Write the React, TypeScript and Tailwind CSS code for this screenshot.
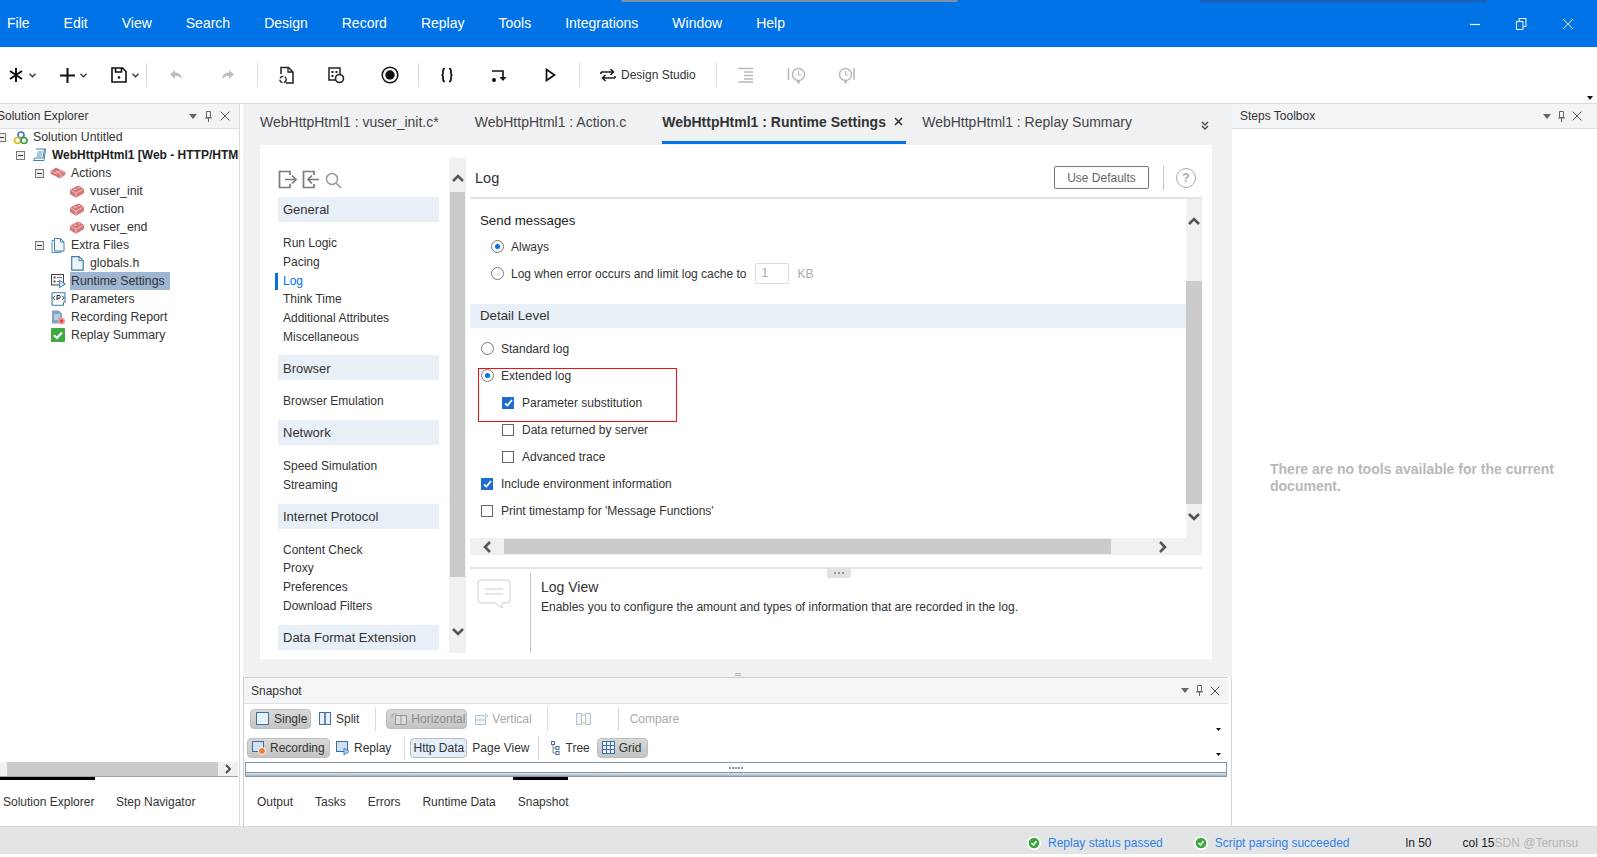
import React from "react";

const menu = ["File", "Edit", "View", "Search", "Design", "Record", "Replay", "Tools", "Integrations", "Window", "Help"];

function Svg({ w = 16, h = 16, vb, children, className = "" }: { w?: number; h?: number; vb?: string; children: React.ReactNode; className?: string }) {
  return (
    <svg width={w} height={h} viewBox={vb || `0 0 ${w} ${h}`} fill="none" className={"shrink-0 " + className}>
      {children}
    </svg>
  );
}

const Chev = ({ c = "#333" }: { c?: string }) => (
  <Svg w={7} h={5}><path d="M.5 .8 3.5 3.8 6.500 .8" stroke={c} strokeWidth="1.300" /></Svg>
);

const Sep = ({ cls }: { cls: string }) => <div className={"w-px bg-[#dcdcdc] shrink-0 " + cls} />;

function PanelControls({ gap = "gap-[8px]" }: { gap?: string }) {
  return (
    <div className={"flex items-center " + gap}>
      <Svg w={8} h={5}><path d="M0 0h8L4 5z" fill="#666" /></Svg>
      <Svg w={7} h={11}><path d="M1.500 .5h4v6h-4zM0 7h7M3.500 7v4" stroke="#666" strokeWidth="1" /></Svg>
      <Svg w={10} h={10}><path d="M.7 .7 9.300 9.300M9.300 .7 .7 9.300" stroke="#555" strokeWidth="1" /></Svg>
    </div>
  );
}

const Brick = () => (
  <Svg w={14} h={14}>
    <path d="M.5 6 8 2l5.500 3v4L6 13.300.5 10z" fill="#d97a7a" stroke="#c25f5f" strokeWidth=".7" />
    <path d="M.7 6 6 9.200 13.300 5M6 9.200v4" stroke="#f5d0d0" strokeWidth=".8" />
    <ellipse cx="5.300" cy="5.300" rx="2.100" ry="1.400" fill="#eab0b0" stroke="#c25f5f" strokeWidth=".6" />
    <ellipse cx="9" cy="3.800" rx="2" ry="1.300" fill="#eab0b0" stroke="#c25f5f" strokeWidth=".6" />
  </Svg>
);

const Bricks = () => (
  <Svg w={16} h={12}>
    <path d="M1 4 6 1l4 2 5 2v2.500L10 11 6 9 1 6.500z" fill="#d97a7a" stroke="#c25f5f" strokeWidth=".7" />
    <path d="M1 4l5 2.500L10 4M6 4l5 3v4M10 3l5 2.500" stroke="#f3c9c9" strokeWidth=".8" />
  </Svg>
);

const ICONS: Record<string, React.ReactNode> = {
  solution: (
    <Svg w={15} h={15}>
      <circle cx="8" cy="5" r="3" stroke="#3a78c9" strokeWidth="1.700" />
      <circle cx="4.500" cy="10.500" r="3" stroke="#e5b71e" strokeWidth="1.700" />
      <circle cx="11" cy="10.500" r="3" stroke="#3f9e3f" strokeWidth="1.700" />
    </Svg>
  ),
  project: (
    <Svg w={15} h={14}>
      <path d="M4 1h9.500L12 12.500H1.500L2.800 10H11L12.500 1" stroke="#3f7ea8" strokeWidth="1" />
      <path d="M5.500 4h5M5 6h5M4.700 8h5" stroke="#3f7ea8" strokeWidth=".9" />
    </Svg>
  ),
  bricks: <Bricks />,
  brick: <Brick />,
  files: (
    <Svg w={14} h={15}>
      <path d="M1 2.500h2M1 2.500v12h9v-1.500" stroke="#4a90b8" strokeWidth="1" />
      <path d="M3.500 .5h6l3.500 3.500v9h-9.500z" fill="#f3f8fb" stroke="#3f7ea8" strokeWidth="1" />
      <path d="M9.500 .5v3.500h3.500" stroke="#3f7ea8" strokeWidth="1" />
    </Svg>
  ),
  file: (
    <Svg w={13} h={15}>
      <path d="M.7 .7h7.500l4 4v9.500H.7z" fill="#eef5fa" stroke="#3f7ea8" strokeWidth="1.200" />
      <path d="M8 .7v4h4.200" stroke="#3f7ea8" strokeWidth="1" />
    </Svg>
  ),
  runtime: (
    <Svg w={15} h={14}>
      <rect x=".5" y=".5" width="12" height="10.500" fill="#f5f5f5" stroke="#444" />
      <rect x="2.500" y="2.500" width="2" height="2" fill="#555" />
      <rect x="2.500" y="6.500" width="2" height="2" fill="#555" />
      <path d="M6 3.500h5M6 7.500h2" stroke="#777" />
      <path d="M8.500 6.500 14.500 10 8.500 13.500z" fill="#cfe3f7" stroke="#3f82c9" />
    </Svg>
  ),
  params: (
    <Svg w={15} h={14}>
      <path d="M1 .7h13v9.500h-1.500M1 .7v12.500h11.500v-3" stroke="#3f7ea8" strokeWidth="1.100" />
      <path d="M3.800 3.800 2 5.800l1.800 2M11.200 3.800 13 5.800l-1.800 2" stroke="#222" strokeWidth=".9" />
      <path d="M6 8V3.500h2a1.300 1.300 0 0 1 0 2.700H6" stroke="#222" strokeWidth="1" />
    </Svg>
  ),
  report: (
    <Svg w={15} h={15}>
      <path d="M1 .5h7l3 3v10H1z" fill="#7fa4c4" />
      <path d="M3 5h6M3 7h6M3 9h4" stroke="#fff" strokeWidth=".9" />
      <circle cx="10.500" cy="11" r="3.600" fill="#f0a0a0" />
      <circle cx="10.500" cy="11" r="1.700" fill="#ea3c3c" />
    </Svg>
  ),
  summary: (
    <Svg w={14} h={14}>
      <rect width="14" height="14" rx="1" fill="#3eab3e" />
      <path d="M3 7.200 6 10l5-5.500" stroke="#fff" strokeWidth="2.200" />
    </Svg>
  ),
};

function TreeRow({ indent, exp, icon, text, bold, sel }: { indent: string; exp?: boolean; icon: string; text: string; bold?: boolean; sel?: boolean }) {
  return (
    <div className={"flex items-center h-[18px] whitespace-nowrap " + indent}>
      {exp && (
        <div className="w-[9px] h-[9px] border border-[#777] bg-[#eee] flex items-center justify-center mr-[7px] shrink-0">
          <div className="w-[5px] h-px bg-[#333]" />
        </div>
      )}
      <div className="w-[14px] flex justify-center shrink-0">{ICONS[icon]}</div>
      <span className={"ml-[5px] px-px leading-[18px] " + (sel ? "bg-[#9fb6d3] pr-[5px] " : "") + (bold ? "font-bold text-[#222] text-[12px]" : "text-[#333] text-[12.300px]")}>{text}</span>
    </div>
  );
}

function NavSection({ title, items, active, mb }: { title: string; items: string[]; active?: string; mb: string }) {
  return (
    <div className={mb}>
      <div className="h-[25px] bg-[#e8eff7] flex items-center pl-[5px] pt-px text-[13px] text-[#333]">{title}</div>
      <div className="mt-[12px]">
        {items.map((i) => (
          <div key={i} className={"h-[18.800px] leading-[18.800px] pl-[5px] relative " + (i === active ? "text-[#0073e7]" : "text-[#333]")}>
            {i === active && <div className="absolute left-[-3px] top-px w-[3px] h-[17px] bg-[#0073e7]" />}
            {i}
          </div>
        ))}
      </div>
    </div>
  );
}

function Radio({ on }: { on?: boolean }) {
  return (
    <div className="w-[13px] h-[13px] rounded-full border border-[#777] bg-white flex items-center justify-center shrink-0">
      {on && <div className="w-[5px] h-[5px] rounded-full bg-[#0073e7]" />}
    </div>
  );
}

function Check({ on }: { on?: boolean }) {
  return on ? (
    <div className="w-[12px] h-[12px] bg-[#1c6cd1] flex items-center justify-center shrink-0">
      <Svg w={9} h={8}><path d="M1 4.500 3.500 6.500 8 1" stroke="#fff" strokeWidth="1.800" /></Svg>
    </div>
  ) : (
    <div className="w-[12px] h-[12px] border border-[#666] bg-white shrink-0" />
  );
}

function Arrow({ dir, c = "#555" }: { dir: "u" | "d" | "l" | "r"; c?: string }) {
  const d = { u: "M1 7 6 2l5 5", d: "M1 2l5 5 5-5", l: "M7 1 2 6l5 5", r: "M2 1l5 5-5 5" }[dir];
  const w = dir === "u" || dir === "d" ? 12 : 9;
  const h = dir === "u" || dir === "d" ? 9 : 12;
  return <Svg w={w} h={h}><path d={d} stroke={c} strokeWidth="2.600" /></Svg>;
}

function OptRow({ ml, kind, on, text }: { ml: string; kind: "r" | "c"; on?: boolean; text: string }) {
  return (
    <div className={"flex items-center h-[27px] text-[#333] " + ml}>
      {kind === "r" ? <Radio on={on} /> : <Check on={on} />}
      <span className={kind === "r" ? "ml-[7px]" : "ml-[8px]"}>{text}</span>
    </div>
  );
}

function SnapBtn({ children, cls, on }: { children: React.ReactNode; cls: string; on?: boolean }) {
  return (
    <div className={"h-[20px] flex items-center rounded-[4px] shrink-0 " + (on ? "bg-gradient-to-b from-[#d9d9d9] to-[#c4c4c4] border border-[#bdbdbd] " : "") + cls}>
      {children}
    </div>
  );
}

const CheckCircle = () => (
  <Svg w={14} h={14}>
    <circle cx="7" cy="7" r="7" fill="#fff" />
    <circle cx="7" cy="7" r="5.300" fill="#3ca63c" />
    <path d="M4.500 7 6.500 9 9.500 5" stroke="#fff" strokeWidth="1.500" />
  </Svg>
);

export default function App() {
  return (
    <div className="w-[1597px] h-[857px] overflow-hidden bg-white flex flex-col relative font-['Liberation_Sans','Arial',sans-serif] text-[12px]">
      {/* stray window shadows at the top edge */}
      <div className="absolute left-[621px] top-0 w-[337px] h-[2px] bg-[#7f8ea3] rounded-b-[3px]" />
      <div className="absolute left-[1200px] top-0 w-[287px] h-[2px] bg-[#1d5fae]" />

      {/* title bar */}
      <header className="h-[47px] bg-[#0073e7] flex items-center shrink-0 text-white">
        <nav className="flex gap-[34px] pl-[7px] text-[14px]">
          {menu.map((m) => <span key={m}>{m}</span>)}
        </nav>
        <div className="ml-auto flex items-center gap-[35px] pr-[23px]">
          <Svg w={12} h={12}><path d="M1 6.500h10" stroke="#fff" strokeWidth="1.200" /></Svg>
          <Svg w={11} h={12}><path d="M.5 3.500h6.500v8H.5zM3 3.500V.5h7v8H7" stroke="#fff" /></Svg>
          <Svg w={12} h={12}><path d="M1 1l10 10M11 1 1 11" stroke="#fff" /></Svg>
        </div>
      </header>

      {/* toolbar */}
      <div className="h-[56px] shrink-0 flex items-center relative pl-[8px]">
        <div className="flex items-center gap-[5px] w-[45px]">
          <Svg w={16} h={16}><path d="M8 1v14M2 4l12 8M14 4 2 12" stroke="#111" strokeWidth="2" /></Svg>
          <Chev />
        </div>
        <div className="flex items-center gap-[4px] ml-[6px] w-[46px]">
          <Svg w={17} h={17}><path d="M8.500 1v15M1 8.500h15" stroke="#111" strokeWidth="2" /></Svg>
          <Chev />
        </div>
        <div className="flex items-center gap-[5px] ml-[6px]">
          <Svg w={16} h={16}><path d="M1 1h10.500L15 4.500V15H1zM4.500 1v4h6V1" stroke="#111" strokeWidth="1.600" /><circle cx="8" cy="10.500" r="1.300" fill="#111" /></Svg>
          <Chev />
        </div>
        <Sep cls="h-[24px] ml-[7px]" />
        <div className="ml-[22px]">
          <Svg w={14} h={12}><path d="M6 1 1 5.500 6 10V7c3 0 5 .5 7 3-.5-4-3-6.500-7-6.500z" fill="#bdbdbd" /></Svg>
        </div>
        <div className="ml-[38px]">
          <Svg w={14} h={12}><path d="M8 1l5 4.500L8 10V7c-3 0-5 .5-7 3 .5-4 3-6.500 7-6.500z" fill="#bdbdbd" /></Svg>
        </div>
        <Sep cls="h-[24px] ml-[22px]" />
        <div className="ml-[20px]">
          <Svg w={17} h={19}><path d="M3 8V1.500h7.500L15 6v11H8" stroke="#222" strokeWidth="1.500" /><path d="M10 1.500V6h5" stroke="#222" strokeWidth="1.300" /><circle cx="5" cy="13.500" r="3.200" stroke="#222" strokeWidth="1.300" strokeDasharray="4 1.500" /></Svg>
        </div>
        <div className="ml-[33px]">
          <Svg w={17} h={17}><rect x="1" y="1" width="11" height="12" stroke="#222" strokeWidth="1.500" /><path d="M3.500 4h2v2h-2zM7.500 4h2v2h-2zM3.500 8h2v2h-2z" fill="#222" /><circle cx="11.500" cy="11.500" r="4" fill="#fff" stroke="#222" strokeWidth="1.600" /></Svg>
        </div>
        <div className="ml-[36px]">
          <Svg w={18} h={18}><circle cx="9" cy="9" r="7.800" stroke="#111" strokeWidth="1.500" /><circle cx="9" cy="9" r="4.700" fill="#111" /></Svg>
        </div>
        <Sep cls="h-[24px] ml-[19px]" />
        <div className="ml-[21px]">
          <Svg w={14} h={16}><path d="M5 1.500C3 1.500 3 2.500 3 4v2.500C3 7.500 2.500 8 1.500 8c1 0 1.500.5 1.500 1.500V12c0 1.500 0 2.500 2 2.500M9 1.500c2 0 2 1 2 2.500v2.500c0 1 .5 1.500 1.500 1.500-1 0-1.500.5-1.500 1.500V12c0 1.500 0 2.500-2 2.500" stroke="#111" strokeWidth="1.700" /></Svg>
        </div>
        <div className="ml-[37px]">
          <Svg w={16} h={15}><path d="M1 3h11v7" stroke="#111" strokeWidth="1.600" /><path d="M8.500 9l3.500 4 3.500-4z" fill="#111" /><circle cx="3" cy="12" r="2" fill="#111" /></Svg>
        </div>
        <div className="ml-[38px]">
          <Svg w={11} h={14}><path d="M1.500 1.500 9.500 7l-8 5.500z" stroke="#111" strokeWidth="1.700" /></Svg>
        </div>
        <Sep cls="h-[24px] ml-[23px]" />
        <div className="ml-[20px] flex items-center gap-[5px] text-[#333]">
          <Svg w={16} h={16}><path d="M1 5h12M10.500 2 13.500 5l-3 3M1 5v2M15 11H3M5.500 8 2.500 11l3 3M15 11V9" stroke="#222" strokeWidth="1.600" /></Svg>
          <span>Design Studio</span>
        </div>
        <Sep cls="h-[24px] ml-[20px]" />
        <div className="ml-[20px]">
          <Svg w={17} h={16}><path d="M1 1.500h15M7 5h9M7 8.500h9M7 12h9M1 15h15" stroke="#b8b8b8" strokeWidth="1.500" /></Svg>
        </div>
        <div className="ml-[33px]">
          <Svg w={19} h={17}><circle cx="11.500" cy="7.500" r="6" stroke="#b8b8b8" strokeWidth="1.500" /><path d="M11.500 4v4h3" stroke="#b8b8b8" /><path d="M1.500 1v12" stroke="#b8b8b8" strokeWidth="1.500" /><circle cx="11.500" cy="15" r="1.500" fill="#b8b8b8" /></Svg>
        </div>
        <div className="ml-[32px]">
          <Svg w={18} h={17}><circle cx="7.500" cy="7.500" r="6" stroke="#b8b8b8" strokeWidth="1.500" /><path d="M7.500 4v4h3" stroke="#b8b8b8" /><path d="M16 1v12" stroke="#b8b8b8" strokeWidth="1.500" /><circle cx="7.500" cy="15" r="1.500" fill="#b8b8b8" /></Svg>
        </div>
        <div className="absolute right-[4px] bottom-[3px]">
          <Svg w={6} h={4}><path d="M0 0h6L3 4z" fill="#111" /></Svg>
        </div>
      </div>

      {/* main */}
      <div className="h-[723px] shrink-0 flex border-t border-[#d9dadb]">
        {/* left column */}
        <aside className="w-[240px] shrink-0 flex flex-col border-r border-[#dcdcdc]">
          <div className="h-[25px] bg-[#f3f4f6] border-b border-[#dfe0e1] flex items-center pr-[9px] overflow-hidden shrink-0">
            <span className="ml-[-3px] text-[#333]">Solution Explorer</span>
            <div className="ml-auto"><PanelControls /></div>
          </div>
          <div className="flex-1 overflow-hidden mt-[-1px]">
            <TreeRow indent="ml-[-3px]" exp icon="solution" text="Solution Untitled" />
            <TreeRow indent="pl-[16px]" exp icon="project" text="WebHttpHtml1 [Web - HTTP/HTML]" bold />
            <TreeRow indent="pl-[35px]" exp icon="bricks" text="Actions" />
            <TreeRow indent="pl-[70px]" icon="brick" text="vuser_init" />
            <TreeRow indent="pl-[70px]" icon="brick" text="Action" />
            <TreeRow indent="pl-[70px]" icon="brick" text="vuser_end" />
            <TreeRow indent="pl-[35px]" exp icon="files" text="Extra Files" />
            <TreeRow indent="pl-[70px]" icon="file" text="globals.h" />
            <TreeRow indent="pl-[51px]" icon="runtime" text="Runtime Settings" sel />
            <TreeRow indent="pl-[51px]" icon="params" text="Parameters" />
            <TreeRow indent="pl-[51px]" icon="report" text="Recording Report" />
            <TreeRow indent="pl-[51px]" icon="summary" text="Replay Summary" />
          </div>
          <div className="h-[15px] shrink-0 bg-[#f0f0f0] border-b border-[#9aa5b1] flex items-center mr-px">
            <div className="w-[7px]" />
            <div className="w-[211px] h-full bg-[#cbcbcb]" />
            <div className="flex-1 flex justify-center"><Svg w={7} h={10}><path d="M1 1l4 4-4 4" stroke="#444" strokeWidth="1.800" /></Svg></div>
          </div>
          <div className="h-[49px] shrink-0 flex whitespace-nowrap">
            <div className="border-t-[3px] border-black pl-[3px] w-[95px]"><div className="pt-[13px] text-[#333]">Solution Explorer</div></div>
            <div className="pl-[21px] pt-[16px] text-[#333]">Step Navigator</div>
          </div>
        </aside>

        {/* centre */}
        <main className="w-[992px] shrink-0 flex flex-col pl-[3px] border-r border-[#d4d4d4]">
          <div className="h-[573px] shrink-0 bg-[#f0f1f3] flex flex-col -mr-px">
            <div className="h-[40px] shrink-0 flex pl-[17px] gap-[36px] text-[14px] text-[#444] items-start pt-[8px] relative whitespace-nowrap">
              <span>WebHttpHtml1 : vuser_init.c*</span>
              <span>WebHttpHtml1 : Action.c</span>
              <div className="flex gap-[8px] h-[32px] -mb-[8px] border-b-[3px] border-[#0073e7] items-start w-[244px]">
                <span className="font-bold text-[#333]">WebHttpHtml1 : Runtime Settings</span>
                <Svg w={9} h={9} className="mt-[5px]"><path d="M1 1l7 7M8 1 1 8" stroke="#333" strokeWidth="1.600" /></Svg>
              </div>
              <span className="-ml-[20px]">WebHttpHtml1 : Replay Summary</span>
              <div className="absolute left-[958px] top-[17px]">
                <Svg w={8} h={10}><path d="M1 1l3 3 3-3M1 5l3 3 3-3" stroke="#444" strokeWidth="1.300" /></Svg>
              </div>
            </div>
            {/* card */}
            <div className="ml-[17px] mt-px w-[952px] h-[514px] bg-white flex shrink-0">
              {/* nav */}
              <div className="w-[207px] shrink-0 flex h-[508px]">
                <div className="w-[189px] pl-[18px] pr-[10px] shrink-0">
                  <div className="h-[52px] flex items-end pb-[8px] gap-[5px]">
                    <Svg w={19} h={19}><path d="M12 5V1.500H1.500v16H12V14M7 9.500h11M14 5.500l4 4-4 4" stroke="#7b7b7b" strokeWidth="1.700" /></Svg>
                    <Svg w={18} h={19}><path d="M12 5V1.500H1.500v16H12V14M17 9.500H6M10 5.500l-4 4 4 4" stroke="#7b7b7b" strokeWidth="1.700" /></Svg>
                    <Svg w={17} h={17}><circle cx="7" cy="7" r="5.500" stroke="#9a9a9a" strokeWidth="1.500" /><path d="M11 11l5 5" stroke="#9a9a9a" strokeWidth="1.700" /></Svg>
                  </div>
                  <NavSection mb="mb-[8.500px]" title="General" items={["Run Logic", "Pacing", "Log", "Think Time", "Additional Attributes", "Miscellaneous"]} active="Log" />
                  <NavSection mb="mb-[9px]" title="Browser" items={["Browser Emulation"]} />
                  <NavSection mb="mb-[9px]" title="Network" items={["Speed Simulation", "Streaming"]} />
                  <NavSection mb="mb-[9px]" title="Internet Protocol" items={["Content Check", "Proxy", "Preferences", "Download Filters"]} />
                  <div className="h-[25px] bg-[#e8eff7] flex items-center pl-[5px] pt-px text-[13px] text-[#333] whitespace-nowrap">Data Format Extension</div>
                </div>
                <div className="w-[17px] mt-[13px] bg-[#f0f0f0] flex flex-col items-center">
                  <div className="h-[34px] flex items-start pt-[16px] justify-center"><Arrow dir="u" /></div>
                  <div className="w-[15px] h-[385px] bg-[#cbcbcb]" />
                  <div className="flex-1 flex items-end justify-center pb-[17px]"><Arrow dir="d" /></div>
                </div>
              </div>
              {/* right pane */}
              <div className="w-[732px] ml-[3px] shrink-0 flex flex-col h-[508px]">
                <div className="h-[54px] shrink-0 flex items-center border-b-[2px] border-[#e4e4e4] pl-[5px] pr-[5px] pt-[15px]">
                  <span className="text-[14.500px] text-[#333]">Log</span>
                  <div className="ml-auto -mt-[2px] w-[95px] h-[23px] border border-[#777] rounded-[2px] flex items-center justify-center text-[#666]">Use Defaults</div>
                  <div className="w-px h-[24px] -mt-[2px] bg-[#c8c8c8] ml-[14px]" />
                  <div className="w-[20px] h-[20px] -mt-[2px] rounded-full border-[1.500px] border-[#aaa] text-[#aaa] font-bold flex items-center justify-center ml-[12px] mr-px">?</div>
                </div>
                <div className="h-[339px] shrink-0 flex">
                  <div className="w-[716px] shrink-0 relative">
                    <div className="pl-[10px] pt-[13px] h-[18px] box-content text-[13.300px] text-[#222] leading-[18px]">Send messages</div>
                    <div className="mt-[3px]">
                      <OptRow ml="ml-[21px]" kind="r" on text="Always" />
                      <div className="flex items-center h-[27px] ml-[21px] text-[#333]">
                        <Radio />
                        <span className="ml-[7px]">Log when error occurs and limit log cache to</span>
                        <div className="w-[34px] h-[21px] border border-[#ddd] rounded-[2px] ml-[9px] pl-[5px] text-[#aaa] leading-[19px]">1</div>
                        <span className="ml-[8px] text-[#aaa]">KB</span>
                      </div>
                    </div>
                    <div className="mt-[17px] h-[24px] bg-[#e8eff7] flex items-center pl-[10px] text-[13.300px] text-[#333]">Detail Level</div>
                    <div className="mt-[7px]">
                      <OptRow ml="ml-[11px]" kind="r" text="Standard log" />
                      <OptRow ml="ml-[11px]" kind="r" on text="Extended log" />
                      <OptRow ml="ml-[32px]" kind="c" on text="Parameter substitution" />
                      <OptRow ml="ml-[32px]" kind="c" text="Data returned by server" />
                      <OptRow ml="ml-[32px]" kind="c" text="Advanced trace" />
                      <OptRow ml="ml-[11px]" kind="c" on text="Include environment information" />
                      <OptRow ml="ml-[11px]" kind="c" text="Print timestamp for 'Message Functions'" />
                    </div>
                    <div className="absolute left-[8px] top-[169px] w-[199px] h-[54px] border-[1.500px] border-[#f01010]" />
                  </div>
                  <div className="w-[16px] bg-[#f0f0f0] flex flex-col items-center">
                    <div className="h-[82px] flex items-start pt-[18px]"><Arrow dir="u" /></div>
                    <div className="w-[16px] h-[223px] bg-[#cbcbcb]" />
                    <div className="pt-[8px]"><Arrow dir="d" /></div>
                  </div>
                </div>
                <div className="h-[17px] shrink-0 bg-[#f0f0f0] flex items-center">
                  <div className="w-[34px] flex justify-center"><Arrow dir="l" /></div>
                  <div className="w-[607px] h-[15px] bg-[#cbcbcb]" />
                  <div className="flex-1 flex justify-end pr-[35px]"><Arrow dir="r" /></div>
                </div>
                <div className="mt-[12px] h-[2px] bg-[#e4e4e4] shrink-0 flex justify-center relative">
                  <div className="absolute left-[357px] top-[1px] w-[24px] h-[10px] bg-[#e2e2e2] rounded-b-[2px] flex items-center justify-center gap-[2px]">
                    <div className="w-[2px] h-[2px] bg-[#999]" /><div className="w-[2px] h-[2px] bg-[#999]" /><div className="w-[2px] h-[2px] bg-[#999]" />
                  </div>
                </div>
                <div className="flex-1 flex">
                  <div className="w-[61px] shrink-0 pl-[7px] pt-[6px] border-r border-[#c4c4c4] mt-[4px]">
                    <Svg w={34} h={30}><path d="M4 1h26a3 3 0 0 1 3 3v17a3 3 0 0 1-3 3h-5v5l-7-5H4a3 3 0 0 1-3-3V4a3 3 0 0 1 3-3z" stroke="#ccc" strokeWidth="1" /><path d="M8 10h18M8 15h18" stroke="#ccc" strokeWidth="1" /></Svg>
                  </div>
                  <div className="pl-[10px] pt-[9px]">
                    <div className="text-[14px] text-[#333] leading-[18px]">Log View</div>
                    <div className="mt-[2px] text-[#333] leading-[18px]">Enables you to configure the amount and types of information that are recorded in the log.</div>
                  </div>
                </div>
              </div>
            </div>
            <div className="h-[18px] flex justify-center items-end shrink-0">
              <div className="flex flex-col gap-px pb-px"><div className="w-[6px] h-px bg-[#b5b5b5]" /><div className="w-[6px] h-px bg-[#b5b5b5]" /></div>
            </div>
          </div>

          {/* snapshot panel */}
          <div className="h-[100px] shrink-0 flex flex-col border-t border-[#cfcfcf] border-l border-l-[#cfcfcf] mr-[3px]">
            <div className="h-[26px] bg-[#f4f5f7] border-b border-[#dfe0e1] flex items-center pl-[7px] pr-[8px] shrink-0">
              <span className="text-[#333]">Snapshot</span>
              <div className="ml-auto"><PanelControls gap="gap-[7px]" /></div>
            </div>
            <div className="h-[29px] flex items-center pl-[6px] relative shrink-0 text-[#333]">
              <SnapBtn on cls="w-[61px] pl-[5px] gap-[5px]">
                <Svg w={13} h={13}><rect x=".5" y=".5" width="12" height="12" fill="#e8f0f8" stroke="#3f6f9e" /></Svg>
                <span>Single</span>
              </SnapBtn>
              <div className="flex items-center gap-[5px] ml-[8px] mr-[8px]">
                <Svg w={12} h={13}><rect x=".5" y=".5" width="11" height="12" fill="#e8f0f8" stroke="#3f6f9e" /><path d="M6 1v11" stroke="#3f6f9e" strokeWidth="1.500" /></Svg>
                <span>Split</span>
              </div>
              <Sep cls="h-[24px] ml-[8px]" />
              <SnapBtn on cls="w-[81px] ml-[10px] pl-[3px] gap-[3px] text-[#8c8c8c]">
                <Svg w={18} h={13}><path d="M1 4 3 2h4M3 2 1.500 6" stroke="#9ab" /><rect x="5.500" y="3.500" width="11" height="9" fill="#ddd" stroke="#8a9aa8" /><path d="M11 4v8" stroke="#8a9aa8" /></Svg>
                <span>Horizontal</span>
              </SnapBtn>
              <div className="flex items-center gap-[3px] ml-[8px] text-[#aaa]">
                <Svg w={14} h={13}><rect x=".5" y="3.500" width="10" height="9" fill="#f2f5f8" stroke="#b3c4d4" /><path d="M1 8h9" stroke="#b3c4d4" /><path d="M10 1l3 3-3 2" stroke="#b3c4d4" /></Svg>
                <span>Vertical</span>
              </div>
              <Sep cls="h-[24px] ml-[15px]" />
              <div className="ml-[28px]">
                <Svg w={15} h={14}><rect x=".5" y="1.500" width="5" height="11" fill="#f2f5f8" stroke="#b8c4ce" /><rect x="9.500" y="1.500" width="5" height="11" fill="#f2f5f8" stroke="#b8c4ce" /><path d="M6 3h3M6 11h3" stroke="#d9b26a" /></Svg>
              </div>
              <Sep cls="h-[24px] ml-[27px]" />
              <span className="ml-[11px] text-[#aaa]">Compare</span>
              <div className="absolute right-[7px] top-[24px]"><Svg w={5} h={3}><path d="M0 0h5L2.500 3z" fill="#111" /></Svg></div>
            </div>
            <div className="h-[29px] flex items-center pl-[3px] relative shrink-0 text-[#333]">
              <SnapBtn on cls="w-[83px] pl-[4px] gap-[4px]">
                <Svg w={14} h={14}><rect x=".5" y=".5" width="11" height="10" fill="#cfe0f0" stroke="#3f6f9e" /><circle cx="10" cy="10" r="3.500" fill="#ec7a3c" stroke="#fff" /></Svg>
                <span>Recording</span>
              </SnapBtn>
              <div className="flex items-center gap-[4px] ml-[6px]">
                <Svg w={14} h={14}><rect x=".5" y=".5" width="11" height="10" fill="#cfe0f0" stroke="#3f6f9e" /><path d="M8 7l5 3.500L8 14z" fill="#bcd6f2" stroke="#3f82c9" /></Svg>
                <span>Replay</span>
              </div>
              <Sep cls="h-[24px] ml-[13px]" />
              <SnapBtn cls="w-[57px] ml-[5px] justify-center bg-[#e3eefb] border border-[#bdbdbd]">Http Data</SnapBtn>
              <span className="ml-[5px]">Page View</span>
              <Sep cls="h-[24px] ml-[8px]" />
              <div className="flex items-center gap-[6px] ml-[12px]">
                <Svg w={9} h={14}><path d="M2 4v8h3M2 7h3" stroke="#888" /><rect x=".5" y=".5" width="3" height="3" stroke="#3f6f9e" /><rect x="5" y="5.500" width="3" height="3" stroke="#3f6f9e" /><rect x="5" y="10.500" width="3" height="3" stroke="#3f6f9e" /></Svg>
                <span>Tree</span>
              </div>
              <SnapBtn on cls="w-[51px] ml-[7px] pl-[4px] gap-[4px]">
                <Svg w={13} h={13}><rect x=".5" y=".5" width="12" height="12" fill="#e8f0f8" stroke="#3f6f9e" /><path d="M1 4.500h11M1 8.500h11M4.500 1v11M8.500 1v11" stroke="#3f6f9e" /></Svg>
                <span>Grid</span>
              </SnapBtn>
              <div className="absolute right-[7px] top-[20px]"><Svg w={5} h={3}><path d="M0 0h5L2.500 3z" fill="#111" /></Svg></div>
            </div>
            <div className="h-[15px] mx-px border border-[#7f98b3] flex flex-col shrink-0 relative">
              <div className="h-[9px] flex justify-center items-center gap-px">
                {[0, 1, 2, 3, 4].map((d) => <div key={d} className="w-[2px] h-[2px] bg-[#7f98b3]" />)}
              </div>
              <div className="flex-1 bg-gradient-to-b from-[#dfe3e6] to-[#a9b2ba] border-t border-[#7f98b3]" />
            </div>
          </div>

          <div className="h-[49px] shrink-0 flex pl-[13px] gap-[22px] text-[#333] border-l border-l-[#cfcfcf]">
            <div className="pt-[16px]">Output</div>
            <div className="pt-[16px]">Tasks</div>
            <div className="pt-[16px]">Errors</div>
            <div className="pt-[16px]">Runtime Data</div>
            <div className="border-t-[3px] border-black pt-[13px] pl-[5px] -ml-[5px] self-start h-full">Snapshot</div>
          </div>
        </main>

        {/* right panel */}
        <aside className="flex-1 flex flex-col">
          <div className="h-[25px] bg-[#f3f4f6] border-b border-[#dfe0e1] flex items-center pl-[8px] pr-[15px] shrink-0">
            <span className="text-[#333]">Steps Toolbox</span>
            <div className="ml-auto"><PanelControls gap="gap-[7px]" /></div>
          </div>
          <div className="flex-1 flex items-center pl-[38px] font-bold text-[14px] leading-[17px] text-[#b8b8b8]">
            <div className="w-[300px]">There are no tools available for the current document.</div>
          </div>
        </aside>
      </div>

      {/* status bar */}
      <footer className="h-[28px] shrink-0 bg-[#e3e4e6] flex items-center border-t border-[#dadbdc] pl-[1027px] pt-[4px] whitespace-nowrap">
        <CheckCircle />
        <span className="ml-[7px] text-[#2f7fe8]">Replay status passed</span>
        <div className="ml-[31px]"><CheckCircle /></div>
        <span className="ml-[7px] text-[#2f7fe8]">Script parsing succeeded</span>
        <span className="ml-[56px] text-[#222]">ln 50</span>
        <span className="ml-[31px] text-[#222]">col 15</span>
        <span className="text-[#b5b5b5]">SDN @Terunsu</span>
      </footer>
      <div className="h-[3px] shrink-0 bg-white" />
    </div>
  );
}
